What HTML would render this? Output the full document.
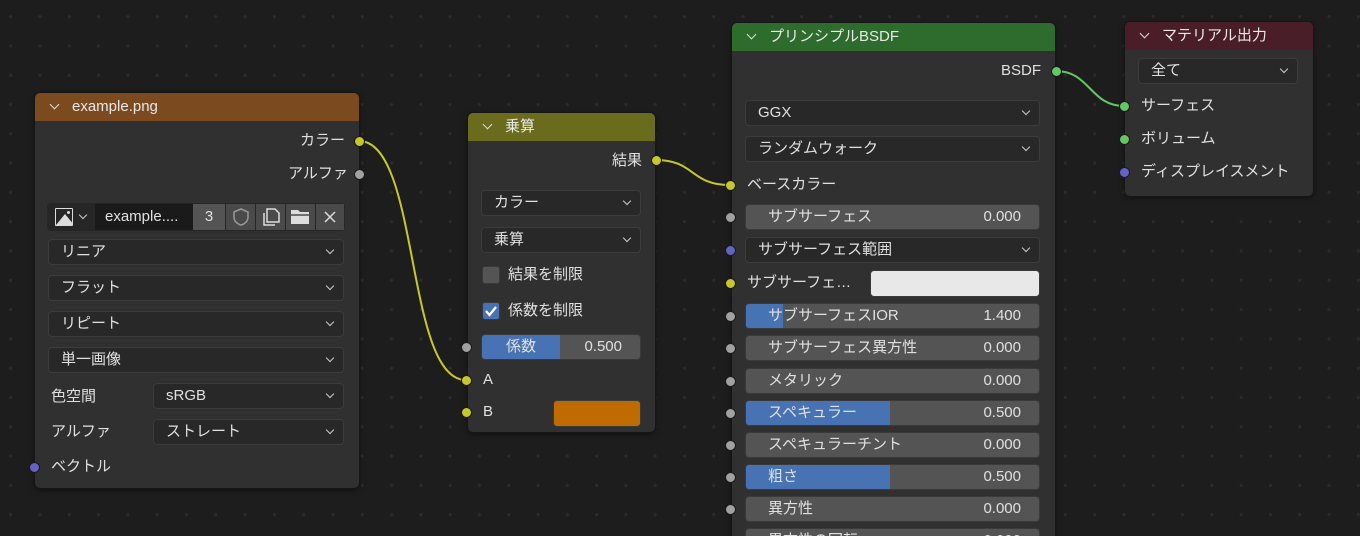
<!DOCTYPE html>
<html><head><meta charset="utf-8"><style>
*{box-sizing:border-box;margin:0;padding:0}
html{width:1360px;height:536px;overflow:hidden}
body{width:1360px;height:536px;overflow:hidden;background:#1d1d1d;background-image:radial-gradient(circle,#2c2c2c 1.4px,transparent 1.8px);background-size:29.3px 29.3px;background-position:-4px 2px;position:relative;font-family:"Liberation Sans","Noto Sans CJK JP",sans-serif;font-size:15px;color:#e0e0e0}
.node{position:absolute;background:#303030;border-radius:5px;box-shadow:0 0 0 1px #161616,0 2px 6px rgba(0,0,0,.5)}
.hdr{position:absolute;left:0;right:0;top:0;height:28px;border-radius:5px 5px 0 0;padding-left:37px;line-height:27px;color:#e8e8e8;font-size:15px}
.hdr:before{content:"";position:absolute;left:16px;top:8px;width:6px;height:6px;border-right:1.5px solid #ddd;border-bottom:1.5px solid #ddd;transform:rotate(45deg)}
.a{position:absolute}
.t{position:absolute;line-height:18px;white-space:nowrap}
.dd{position:absolute;height:26px;background:#282828;border:1px solid #3c3c3c;border-radius:4px;padding-left:12px;line-height:24px;color:#e0e0e0}
.dd:after{content:"";position:absolute;right:10px;top:7px;width:5px;height:5px;border-right:1.5px solid #ccc;border-bottom:1.5px solid #ccc;transform:rotate(45deg)}
.sl{position:absolute;height:26px;background:#545454;border:1px solid #3a3a3a;border-radius:4px;line-height:24px;overflow:hidden}
.sl .f{position:absolute;left:0;top:0;bottom:0;background:#4772b3}
.sl .l{position:absolute;left:22px;top:0}
.sl .v{position:absolute;right:18px;top:0}
.s{position:absolute;width:11px;height:11px;border-radius:50%;border:1px solid #1a1a1a;margin:-5.5px 0 0 -5.5px}
.y{background:#c7c729}.g{background:#a1a1a1}.p{background:#6363c7}.gr{background:#63c763}
.cb{position:absolute;width:18px;height:18px;border-radius:3px;background:#545454;border:1px solid #3a3a3a}
</style></head><body>
<svg class="a" style="left:0;top:0" width="1360" height="536">
<path d="M359 141 C420 141 405 380 466 380" stroke="#c7c729" stroke-width="2" fill="none"/>
<path d="M656 160 C695 160 690 185 730 185" stroke="#c7c729" stroke-width="2" fill="none"/>
<path d="M1056 71 C1090 71 1090 106 1124 106" stroke="#63c763" stroke-width="2" fill="none"/>
</svg>

<div class="node" style="left:35px;top:93px;width:324px;height:395px">
<div class="hdr" style="background:#7b4a1f">example.png</div>
</div>
<div class="t" style="left:300px;top:132px">カラー</div>
<div class="t" style="left:288px;top:165px">アルファ</div>
<div class="s y" style="left:359px;top:141px"></div>
<div class="s g" style="left:359px;top:174px"></div>
<div class="a" style="left:47px;top:203px;width:298px;height:28px;background:#262626;border-radius:4px"></div>
<div class="a" style="left:55px;top:208px;width:18px;height:18px;border:1.5px solid #ddd;border-radius:1px;overflow:hidden"><div style="position:absolute;left:0;bottom:0;width:0;height:0;border-left:9px solid transparent;border-right:9px solid transparent;border-bottom:11px solid #ddd"></div><div style="position:absolute;right:2px;top:2px;width:3px;height:3px;background:#ddd;border-radius:50%"></div></div>
<div class="a" style="left:80px;top:212px;width:6px;height:6px;border-right:1.5px solid #ccc;border-bottom:1.5px solid #ccc;transform:rotate(45deg)"></div>
<div class="a" style="left:95px;top:204px;width:98px;height:26px;background:#1a1a1a;padding-left:10px;line-height:26px;font-size:15px">example....</div>
<div class="a" style="left:193px;top:204px;width:32px;height:26px;background:#545454;text-align:center;line-height:26px">3</div>
<div class="a" style="left:226px;top:204px;width:29px;height:26px;background:#4a4a4a"></div>
<svg class="a" style="left:231px;top:207px" width="20" height="20"><path d="M10 2 L17 5 V10 C17 14 14 17 10 18 C6 17 3 14 3 10 V5 Z" fill="none" stroke="#999" stroke-width="1.5"/></svg>
<div class="a" style="left:256px;top:204px;width:29px;height:26px;background:#4a4a4a"></div>
<svg class="a" style="left:260px;top:207px" width="22" height="20"><path d="M7 2 H15 L19 6 V15 H7 Z M4 6 V18 H15" fill="none" stroke="#ddd" stroke-width="1.5"/></svg>
<div class="a" style="left:286px;top:204px;width:29px;height:26px;background:#4a4a4a"></div>
<svg class="a" style="left:289px;top:207px" width="22" height="20"><path d="M2 3 H9 L11 5 H20 V17 H2 Z" fill="#ddd"/><path d="M2 8 H20" stroke="#4a4a4a" stroke-width="1.5"/></svg>
<div class="a" style="left:316px;top:204px;width:28px;height:26px;background:#4a4a4a"></div>
<svg class="a" style="left:322px;top:209px" width="16" height="16"><path d="M3 3 L13 13 M13 3 L3 13" stroke="#ddd" stroke-width="1.5"/></svg>
<div class="dd" style="left:48px;top:239px;width:296px">リニア</div>
<div class="dd" style="left:48px;top:275px;width:296px">フラット</div>
<div class="dd" style="left:48px;top:311px;width:296px">リピート</div>
<div class="dd" style="left:48px;top:347px;width:296px">単一画像</div>
<div class="t" style="left:51px;top:388px">色空間</div>
<div class="dd" style="left:153px;top:383px;width:191px">sRGB</div>
<div class="t" style="left:51px;top:423px">アルファ</div>
<div class="dd" style="left:153px;top:419px;width:191px">ストレート</div>
<div class="s p" style="left:34px;top:467px"></div>
<div class="t" style="left:51px;top:458px">ベクトル</div>

<div class="node" style="left:468px;top:113px;width:187px;height:319px">
<div class="hdr" style="background:#6b6b1d">乗算</div>
</div>
<div class="t" style="left:612px;top:152px">結果</div>
<div class="s y" style="left:656px;top:160px"></div>
<div class="dd" style="left:481px;top:190px;width:160px">カラー</div>
<div class="dd" style="left:481px;top:227px;width:160px">乗算</div>
<div class="cb" style="left:482px;top:266px"></div>
<div class="t" style="left:508px;top:266px">結果を制限</div>
<div class="cb" style="left:482px;top:302px;background:#4772b3"></div>
<svg class="a" style="left:484px;top:304px" width="14" height="14"><path d="M2 7 L5.5 11 L12 3" stroke="#fff" stroke-width="2.2" fill="none"/></svg>
<div class="t" style="left:508px;top:302px">係数を制限</div>
<div class="sl" style="left:481px;top:334px;width:160px"><div class="f" style="width:78px"></div><div class="l" style="left:24px">係数</div><div class="v" style="right:18px">0.500</div></div>
<div class="s g" style="left:466px;top:347px"></div>
<div class="s y" style="left:466px;top:380px"></div>
<div class="t" style="left:483px;top:371px">A</div>
<div class="s y" style="left:466px;top:412px"></div>
<div class="t" style="left:483px;top:403px">B</div>
<div class="a" style="left:553px;top:400px;width:88px;height:27px;background:#c06b00;border-radius:4px;border:1px solid #3a3a3a"></div>

<div class="node" style="left:732px;top:23px;width:323px;height:530px">
<div class="hdr" style="background:#2e6c2e">プリンシプルBSDF</div>
</div>
<div class="t" style="left:1001px;top:62px">BSDF</div>
<div class="s gr" style="left:1056px;top:71px"></div>
<div class="dd" style="left:745px;top:100px;width:295px">GGX</div>
<div class="dd" style="left:745px;top:136px;width:295px">ランダムウォーク</div>
<div class="s y" style="left:730px;top:185px"></div>
<div class="t" style="left:747px;top:176px">ベースカラー</div>
<div class="s g" style="left:730px;top:217px"></div>
<div class="sl" style="left:745px;top:204px;width:295px"><div class="l">サブサーフェス</div><div class="v">0.000</div></div>
<div class="s p" style="left:730px;top:250px"></div>
<div class="dd" style="left:745px;top:237px;width:295px">サブサーフェス範囲</div>
<div class="s y" style="left:730px;top:283px"></div>
<div class="t" style="left:747px;top:274px">サブサーフェ…</div>
<div class="a" style="left:870px;top:270px;width:170px;height:27px;background:#e8e8e8;border-radius:4px;border:1px solid #3a3a3a"></div>
<div class="s g" style="left:730px;top:316px"></div>
<div class="sl" style="left:745px;top:303px;width:295px"><div class="f" style="width:37px"></div><div class="l">サブサーフェスIOR</div><div class="v">1.400</div></div>
<div class="s g" style="left:730px;top:348px"></div>
<div class="sl" style="left:745px;top:335px;width:295px"><div class="l">サブサーフェス異方性</div><div class="v">0.000</div></div>
<div class="s g" style="left:730px;top:381px"></div>
<div class="sl" style="left:745px;top:368px;width:295px"><div class="l">メタリック</div><div class="v">0.000</div></div>
<div class="s g" style="left:730px;top:413px"></div>
<div class="sl" style="left:745px;top:400px;width:295px"><div class="f" style="width:144px"></div><div class="l">スペキュラー</div><div class="v">0.500</div></div>
<div class="s g" style="left:730px;top:445px"></div>
<div class="sl" style="left:745px;top:432px;width:295px"><div class="l">スペキュラーチント</div><div class="v">0.000</div></div>
<div class="s g" style="left:730px;top:477px"></div>
<div class="sl" style="left:745px;top:464px;width:295px"><div class="f" style="width:144px"></div><div class="l">粗さ</div><div class="v">0.500</div></div>
<div class="s g" style="left:730px;top:509px"></div>
<div class="sl" style="left:745px;top:496px;width:295px"><div class="l">異方性</div><div class="v">0.000</div></div>
<div class="s g" style="left:730px;top:541px"></div>
<div class="sl" style="left:745px;top:528px;width:295px"><div class="l">異方性の回転</div><div class="v">0.000</div></div>

<div class="node" style="left:1125px;top:22px;width:188px;height:174px">
<div class="hdr" style="background:#4a1e29">マテリアル出力</div>
</div>
<div class="dd" style="left:1138px;top:58px;width:160px">全て</div>
<div class="s gr" style="left:1124px;top:106px"></div>
<div class="t" style="left:1141px;top:97px">サーフェス</div>
<div class="s gr" style="left:1124px;top:139px"></div>
<div class="t" style="left:1141px;top:130px">ボリューム</div>
<div class="s p" style="left:1124px;top:172px"></div>
<div class="t" style="left:1141px;top:163px">ディスプレイスメント</div>
</body></html>
